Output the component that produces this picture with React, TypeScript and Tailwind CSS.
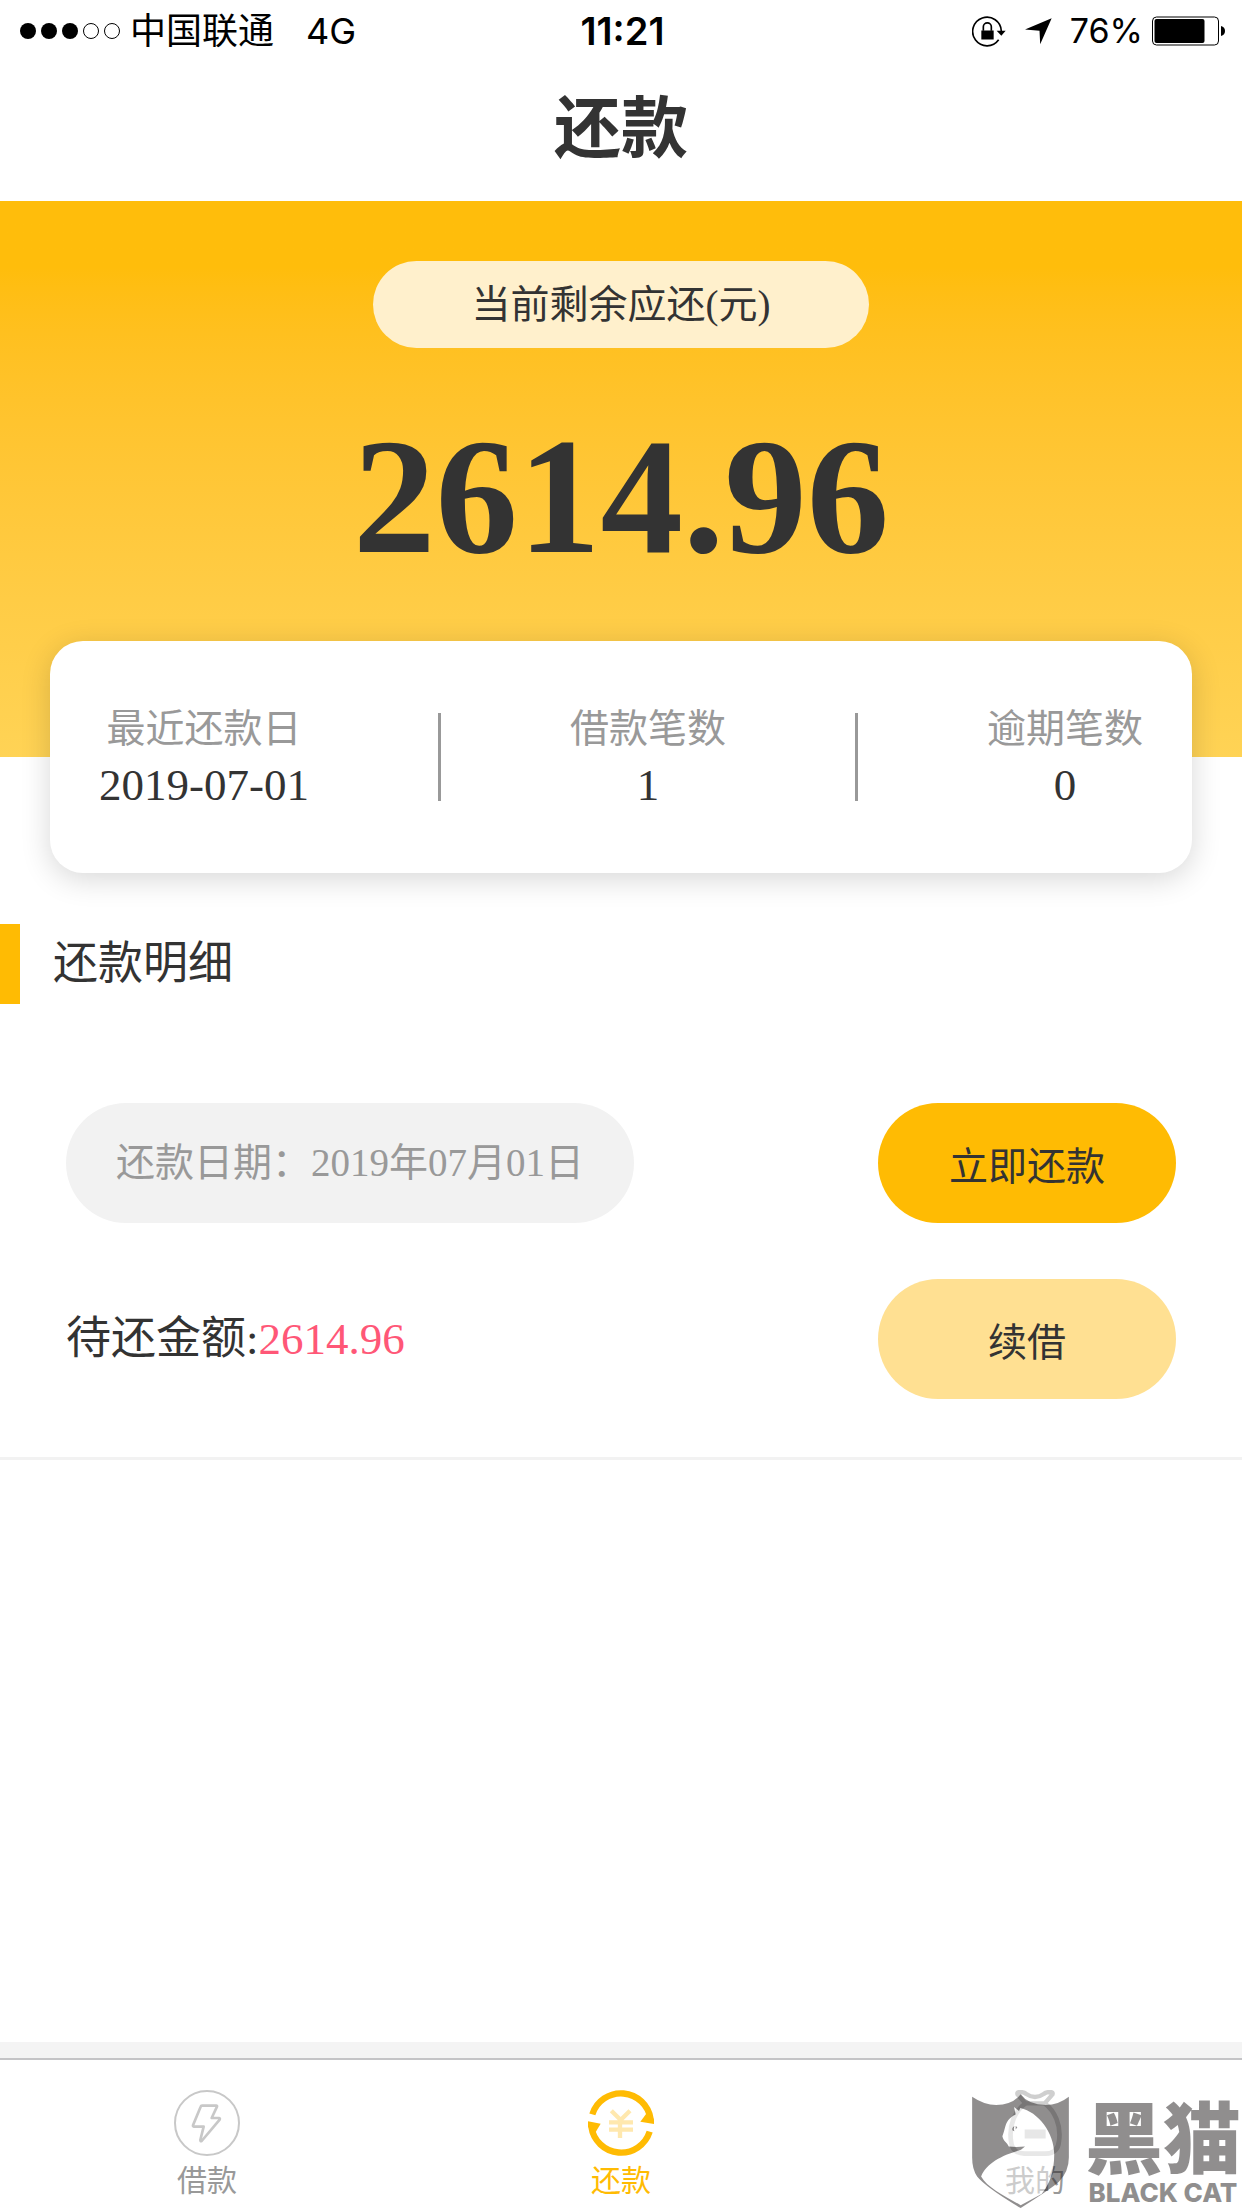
import type { ReactNode } from 'react'
import { clsx } from 'clsx'

interface StatProps {
  label: string
  value: string
}

interface TabProps {
  label: string
  icon: ReactNode
  active?: boolean
}

const stats: StatProps[] = [
  { label: '最近还款日', value: '2019-07-01' },
  { label: '借款笔数', value: '1' },
  { label: '逾期笔数', value: '0' },
]

function SignalDots() {
  return (
    <svg viewBox="0 0 102 18" className="h-[18px] w-[102px]" aria-hidden="true">
      {[9, 30, 51].map((x) => (
        <circle key={x} cx={x} cy="9" r="8" />
      ))}
      {[72, 93].map((x) => (
        <circle key={x} cx={x} cy="9" r="7.5" fill="none" stroke="#000" />
      ))}
    </svg>
  )
}

function RotationLock() {
  return (
    <svg viewBox="0 0 102 92" className="h-[31px] w-[34px]" aria-hidden="true">
      <path d="M88 45A43 43 0 1 0 80 71" fill="none" stroke="#000" strokeWidth="5" />
      <path d="M74 44h27L88 59Z" />
      <path d="M28 43h37v27H28Z" />
      <path d="M34 44V32a12 12 0 0 1 24 0v12" fill="none" stroke="#000" strokeWidth="5" />
    </svg>
  )
}

function LocationArrow() {
  return (
    <svg viewBox="0 0 80 80" className="h-[27px] w-[27px]" aria-hidden="true">
      <path d="M79 1 45 78 43 38 0 34Z" />
    </svg>
  )
}

function Battery() {
  return (
    <svg viewBox="0 0 74 30" className="h-[30px] w-[74px]" aria-hidden="true">
      <rect x="0.5" y="1" width="66" height="28" rx="4" fill="none" stroke="#000" />
      <rect x="2.5" y="3" width="50" height="24" rx="2" />
      <path d="M69 10q4 1 4 5t-4 5Z" />
    </svg>
  )
}

function StatusBar() {
  return (
    <div className="grid h-[62px] grid-cols-3 items-center pr-[16px] pl-[19px] font-['Inter','Noto_Sans_CJK_SC',sans-serif] text-[36px] leading-[60px] text-black">
      <div className="flex items-center">
        <SignalDots />
        <span className="ml-[9px]">中国联通</span>
        <span className="ml-[32px]">4G</span>
      </div>
      <time className="text-center text-[38px] font-semibold">11:21</time>
      <div className="flex items-center justify-end">
        <RotationLock />
        <span className="ml-[19px]">
          <LocationArrow />
        </span>
        <span className="mr-[9px] ml-[18px] text-[34px]">76%</span>
        <Battery />
      </div>
    </div>
  )
}

function Stat({ label, value }: StatProps) {
  return (
    <div className="text-center leading-[56px]">
      <dt className="text-[39px] text-[#999]">{label}</dt>
      <dd className="text-[45px] text-[#333]">{value}</dd>
    </div>
  )
}

function Divider() {
  return <div className="h-[88px] w-[3px] bg-[#999]" />
}

function BoltIcon() {
  return (
    <svg viewBox="0 0 198 198" fill="none" stroke="#c8c8c8" className="h-full w-full" aria-hidden="true">
      <circle cx="99" cy="99" r="96" strokeWidth="6" />
      <path
        d="M84 47h43q3 0 2 3l-16 34h22q4 1 2 5l-54 64q-4 2-4-3l10-40H60q-4-1-3-4l23-56q1-3 4-3Z"
        strokeWidth="8"
        strokeLinejoin="round"
      />
    </svg>
  )
}

function RepayIcon() {
  return (
    <svg viewBox="0 0 198 198" fill="none" className="h-full w-full" aria-hidden="true">
      <path d="M13 73A90 90 0 0 1 188 88" stroke="#ffbb03" strokeWidth="19" />
      <path d="M185 125A90 90 0 0 1 10 110" stroke="#ffbb03" strokeWidth="19" />
      <path d="M177 68 157 95 198 102 198 88Z" fill="#ffbb03" />
      <path d="M0 94 38 101 20 131 0 110Z" fill="#ffbb03" />
      <path
        d="M70 62 98 90 126 62M63 97h72M63 119h72M96 88v56"
        stroke="#ffe8ae"
        strokeWidth="13"
      />
    </svg>
  )
}

function WalletIcon() {
  return (
    <svg viewBox="0 0 198 198" fill="none" stroke="#cfcfcf" className="h-full w-full" aria-hidden="true">
      <path
        d="M70 40 47 14Q43 6 54 6q12 0 19 6 26 18 52 0 7-6 19-6 11 0 7 8L128 40Z"
        strokeWidth="13"
        strokeLinejoin="round"
      />
      <path
        d="M70 40C40 62 20 105 27 153q3 37 40 38h64q37-1 40-38C178 105 158 62 128 40"
        strokeWidth="14"
      />
      <path d="M68 132h63" strokeWidth="27" />
    </svg>
  )
}

function Tab({ label, icon, active }: TabProps) {
  return (
    <a
      href="#"
      className={clsx(
        'flex flex-1 flex-col items-center pt-[30px] pb-[8px]',
        active ? 'text-[#ffbb03]' : 'text-[#999]',
      )}
    >
      <span className="h-[66px] w-[66px]">{icon}</span>
      <span className="text-[30px] leading-[44px]">{label}</span>
    </a>
  )
}

function BlackCatMark() {
  return (
    <div className="pointer-events-none absolute right-0 bottom-0 flex items-start gap-[16px] pr-px text-[#231f20] opacity-50">
      <svg viewBox="93 219 291 343" className="h-[114px] w-[97px]" aria-hidden="true">
        <path
          fill="currentColor"
          d="M93 227Q130 252 165 252 215 252 239 220 262 252 315 252 352 252 384 227V410Q384 452 354 483 335 501 239 562 135 500 108 467 93 445 93 410Z"
        />
        <path
          fill="#fff"
          d="M219 258 234 270 238 261C292 273 340 335 340 400 340 452 326 490 302 520L239 554C190 525 138 500 120 467 137 424 190 401 240 387L252 377Q226 380 203 377C199 365 188 363 184 346 192 328 192 304 207 292 215 284 222 283 224 280Z"
        />
        <path fill="currentColor" d="M220 315Q211 321 215 329L220 331Q217 323 220 315ZM224 315 229 319 224 326Z" />
      </svg>
      <div className="flex flex-col items-center pt-[4px] font-['Inter','Noto_Sans_CJK_SC',sans-serif]">
        <span className="text-[78px] leading-[84px] font-black">黑猫</span>
        <span className="text-[26px] leading-[22px] font-extrabold">BLACK CAT</span>
      </div>
    </div>
  )
}

export default function App() {
  return (
    <div className="flex min-h-screen flex-col bg-white font-['Liberation_Serif','Noto_Sans_CJK_SC',serif] text-[#333]" lang="zh-CN">
      <header>
        <StatusBar />
        <h1 className="pt-[11px] pb-[28px] text-center font-['Noto_Sans_CJK_SC',sans-serif] text-[67px] leading-[100px] font-bold">
          还款
        </h1>
      </header>

      <main className="flex-1">
        <section className="flex flex-col items-center bg-linear-to-b from-[#ffbd0b] from-12% to-[#ffd355] pt-[60px] pb-[178px]">
          <p className="rounded-full bg-[#fff0cc] px-[99px] text-[39px] leading-[87px]">当前剩余应还(元)</p>
          <p className="mt-[66px] text-[165px] leading-[165px] font-bold">2614.96</p>
        </section>

        <dl className="relative mx-[50px] -mt-[116px] flex items-center justify-between rounded-[33px] bg-white px-[49px] py-[60px] shadow-[0_6px_30px_rgba(0,0,0,0.16)]">
          <Stat {...stats[0]} />
          <Divider />
          <Stat {...stats[1]} />
          <Divider />
          <Stat {...stats[2]} />
        </dl>

        <h2 className="mt-[51px] border-l-[20px] border-[#ffbb03] pl-[33px] text-[45px] leading-[80px]">还款明细</h2>

        <section className="mt-[99px] flex flex-col gap-[56px] border-b-[3px] border-[#f2f2f2] px-[66px] pb-[58px]">
          <div className="flex items-center justify-between">
            <p className="rounded-full bg-[#f2f2f2] px-[50px] text-[39px] leading-[120px] text-[#999]">
              还款日期：2019年07月01日
            </p>
            <button className="h-[120px] w-[298px] rounded-full bg-[#ffbb03] font-['Noto_Sans_CJK_SC',sans-serif] text-[39px]">
              立即还款
            </button>
          </div>
          <div className="flex items-center justify-between">
            <p className="text-[45px] leading-[120px]">
              待还金额:<span className="text-[#ff5777]">2614.96</span>
            </p>
            <button className="h-[120px] w-[298px] rounded-full bg-[#ffe092] font-['Noto_Sans_CJK_SC',sans-serif] text-[39px]">
              续借
            </button>
          </div>
        </section>
      </main>

      <footer className="relative border-t-[16px] border-[#f4f4f4] font-['Noto_Sans_CJK_SC',sans-serif]">
        <nav className="flex border-t-2 border-[#c4c4c6]">
          <Tab label="借款" icon={<BoltIcon />} />
          <Tab label="还款" icon={<RepayIcon />} active />
          <Tab label="我的" icon={<WalletIcon />} />
        </nav>
        <BlackCatMark />
      </footer>
    </div>
  )
}
